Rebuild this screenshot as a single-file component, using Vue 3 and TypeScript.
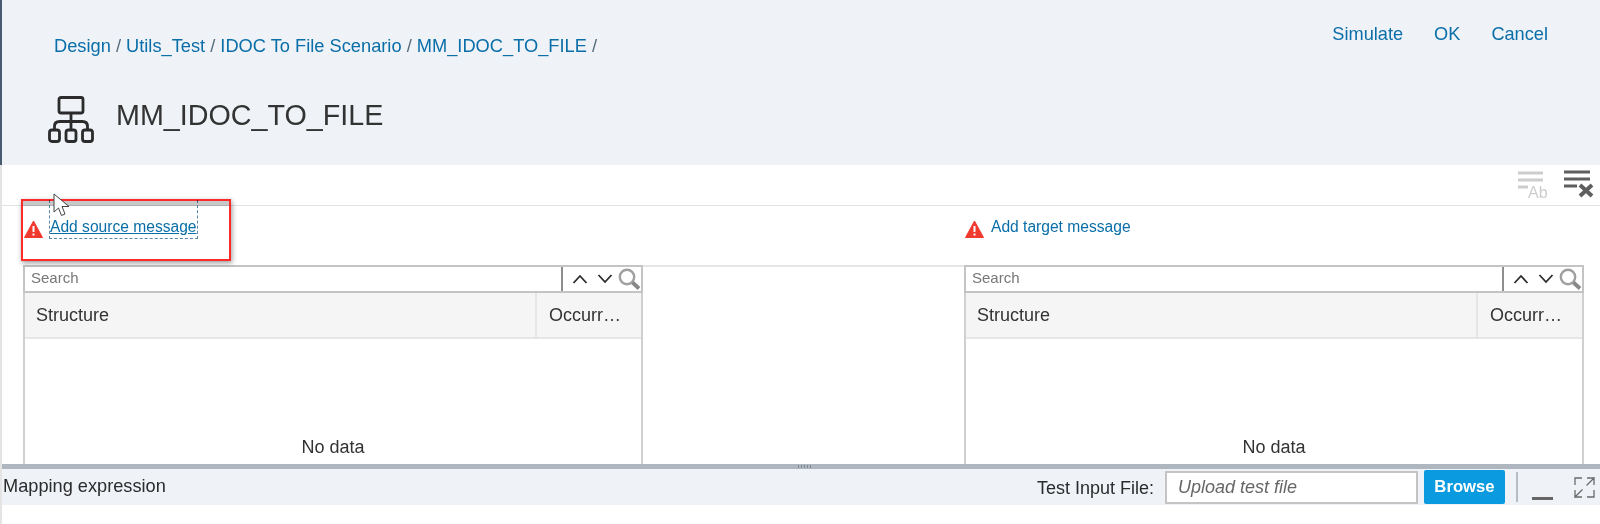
<script setup lang="ts">
const crumbs: string[] = ['Design', 'Utils_Test', 'IDOC To File Scenario', 'MM_IDOC_TO_FILE']
const actions: string[] = ['Simulate', 'OK', 'Cancel']
</script>

<template>
  <div class="app">
    <header class="head">
      <div class="head-main">
        <nav class="crumbs">
          <template v-for="c in crumbs" :key="c"><a class="link">{{ c }}</a><span class="sep"> / </span></template>
        </nav>
        <div class="title-row">
          <svg class="map-icon" width="46" height="47" viewBox="0 0 46 47" fill="none" stroke="#2b2b2b" stroke-width="2.8">
            <rect x="11" y="1.500" width="24" height="15.500" rx="2" />
            <path d="M23 17V34M6.500 34V30.500Q6.500 25.500 11.500 25.500H34.500Q39.500 25.500 39.500 30.500V34" />
            <rect x="1.500" y="34" width="10" height="11.500" rx="2.500" />
            <rect x="18" y="34" width="10" height="11.500" rx="2.500" />
            <rect x="34.500" y="34" width="10" height="11.500" rx="2.500" />
          </svg>
          <h1 class="title">MM_IDOC_TO_FILE</h1>
        </div>
      </div>
      <div class="actions">
        <a v-for="a in actions" :key="a" class="link">{{ a }}</a>
      </div>
    </header>

    <div class="toolbar">
      <svg class="tool" width="33" height="29" viewBox="0 0 33 29" stroke="#cdcdcd" stroke-width="3" fill="none">
        <path d="M1 2H26M1 9H26M1 16H11" />
        <text x="11" y="27" class="ab">Ab</text>
      </svg>
      <svg class="tool tool-clear" width="31" height="29" viewBox="0 0 31 29" stroke="#5f5f5f" stroke-width="3" fill="none">
        <path d="M1 2H27M1 9H27M1 16H14" />
        <path d="M17 15L29 26M29 15L17 26" stroke-width="4" />
      </svg>
    </div>

    <div class="messages">
      <div class="msg">
        <svg class="warn" width="19" height="18" viewBox="0 0 19 18">
          <path d="M9.500 1L18.500 17.500H.5Z" fill="#f0392f" stroke="#f0392f" stroke-linejoin="round" />
          <path d="M9.500 6V12M9.500 13.500V15.500" stroke="#fff" stroke-width="2" />
        </svg>
        <a class="link small focused">Add source message</a>
      </div>
      <div></div>
      <div class="msg">
        <svg class="warn" width="19" height="18" viewBox="0 0 19 18">
          <path d="M9.500 1L18.500 17.500H.5Z" fill="#f0392f" stroke="#f0392f" stroke-linejoin="round" />
          <path d="M9.500 6V12M9.500 13.500V15.500" stroke="#fff" stroke-width="2" />
        </svg>
        <a class="link small">Add target message</a>
      </div>
    </div>

    <div class="panes">
      <section v-for="n in 2" :key="n" class="pane">
        <div class="search">
          <span class="placeholder">Search</span>
          <span class="search-sep"></span>
          <svg width="16" height="10" viewBox="0 0 16 10" fill="none" stroke="#2b2b2b" stroke-width="1.800"><path d="M1.500 9L8 2L14.500 9" /></svg>
          <svg width="16" height="10" viewBox="0 0 16 10" fill="none" stroke="#2b2b2b" stroke-width="1.800"><path d="M1.500 1L8 8L14.500 1" /></svg>
          <svg width="23" height="22" viewBox="0 0 23 22" fill="none" stroke="#a0a0a0">
            <circle cx="9" cy="9" r="7.200" stroke-width="2.400" />
            <path d="M14.500 14.500L21 20.500" stroke-width="3.800" stroke="#888" />
          </svg>
        </div>
        <div class="thead">
          <div class="th th-main">Structure</div>
          <div class="th th-occ">Occurr…</div>
        </div>
        <div class="tbody">No data</div>
      </section>
      <div class="center"></div>
    </div>

    <div class="sash"><span class="grip"></span></div>

    <footer class="foot">
      <span class="foot-title">Mapping expression</span>
      <div class="foot-right">
        <label class="file-label">Test Input File:</label>
        <div class="file-input">Upload test file</div>
        <button class="browse" type="button">Browse</button>
        <span class="foot-sep"></span>
        <span class="minimize"></span>
        <svg class="expand" width="21" height="21" viewBox="0 0 21 21" fill="none" stroke="#6b6b6b" stroke-width="1.300">
          <path d="M1 8V1H8M20 13V20H13M13 1H20L12.500 8.500M20 1V8M8 20H1L8.500 12.500M1 20V13" />
        </svg>
      </div>
    </footer>

    <div class="callout"></div>
    <svg class="cursor" width="17" height="24" viewBox="0 0 17 24">
      <path d="M1 1V19L5.500 15L8.500 22.500L12 21L9 13.500H16Z" fill="#fff" stroke="#444" stroke-width="1" />
    </svg>
  </div>
</template>

<style>
html, body { margin: 0; background: #fff; }
</style>

<style scoped>
.app {
  position: relative;
  width: 1600px;
  height: 524px;
  overflow: hidden;
  box-sizing: border-box;
  padding-left: 2px;
  font-family: "Liberation Sans", Arial, sans-serif;
  color: #2b2b2b;
  background: linear-gradient(90deg, #e4e4e4 0 2px, #fff 2px);
  display: flex;
  flex-direction: column;
}
.head {
  height: 165px;
  flex: none;
  background: #eff3f8;
  margin-left: -2px;
  border-left: 2px solid #4a5a70;
  display: flex;
  justify-content: space-between;
}
.head-main { padding: 34px 0 0 52px; }
.crumbs { font-size: 18.250px; line-height: 24px; white-space: pre; }
.link { color: #0a6ea8; }
.sep { color: #556b7a; }
.title-row { display: flex; align-items: center; gap: 22px; margin: 34px 0 0 -6px; }
.map-icon { flex: none; }
.title { margin: 0 0 8px; font-size: 28.700px; font-weight: 400; line-height: 46px; color: #333; }
.actions { display: flex; gap: 31px; padding: 22px 52px 0 0; font-size: 18.200px; line-height: 24px; }
.toolbar {
  height: 40px;
  flex: none;
  border-bottom: 1px solid #e3e3e3;
  display: flex;
  justify-content: flex-end;
  align-items: center;
  gap: 13px;
  padding-right: 6px;
}
.tool-clear { margin-bottom: 2px; }
.ab { font-size: 16px; fill: #cdcdcd; stroke: none; }
.messages {
  height: 59px;
  flex: none;
  display: grid;
  grid-template-columns: 620px 321px 620px;
  padding-left: 21px;
}
.msg { display: flex; align-items: flex-start; gap: 7px; padding: 14px 0 0 1px; }
.warn { flex: none; }
.small { font-size: 15.600px; line-height: 18px; margin-top: -2px; }
.focused { position: relative; text-decoration: underline; }
.focused::after {
  content: "";
  position: absolute;
  inset: -18px -1px -3px -1px;
  border: 1px dashed #5b86a8;
  border-top: 0;
}
.panes {
  height: 199px;
  flex: none;
  padding-left: 21px;
  display: grid;
  grid-template-columns: 620px 321px 620px;
}
.pane {
  grid-row: 1;
  display: flex;
  flex-direction: column;
  border-right: 2px solid #d0d0d0;
  border-left: 2px solid #d0d0d0;
  box-sizing: border-box;
  min-width: 0;
}
.pane:nth-child(2) { grid-column: 3; }
.center { grid-column: 2; grid-row: 1; border-top: 2px solid #e6e6e6; }
.search {
  height: 28px;
  flex: none;
  box-sizing: border-box;
  margin-left: -2px;
  margin-right: -2px;
  border: 2px solid #c4c4c4;
  display: flex;
  align-items: center;
  background: #fff;
}
.placeholder { flex: 1; padding: 0 0 4px 6px; font-size: 15px; color: #777; }
.search-sep { width: 2px; height: 24px; background: #8e8e8e; margin-right: 9px; }
.search svg:nth-of-type(2) { margin-left: 9px; margin-right: 5px; }
.thead { display: flex; height: 46px; flex: none; background: #f5f5f5; border-bottom: 2px solid #e6e6e6; box-sizing: border-box; }
.th { font-size: 18px; display: flex; align-items: center; color: #333; }
.th-main { flex: 1; padding-left: 11px; }
.th-occ { width: 106px; box-sizing: border-box; padding-left: 12px; border-left: 2px solid #e6e6e6; }
.tbody { flex: 1; display: flex; align-items: flex-end; justify-content: center; font-size: 18px; padding-bottom: 6px; color: #333; }
.sash {
  height: 5px;
  flex: none;
  background: #aeb7bf;
  display: flex;
  justify-content: center;
  align-items: center;
}
.grip { width: 14px; height: 3px; margin-left: 8px; background: repeating-linear-gradient(90deg, #7e8890 0 1px, transparent 1px 3px); }
.foot {
  height: 36px;
  flex: none;
  background: #eff3f8;
  display: flex;
  align-items: center;
  justify-content: space-between;
  padding-left: 1px;
}
.foot-title { font-size: 18.200px; margin-bottom: 2px; }
.foot-right { display: flex; align-items: center; }
.file-label { font-size: 18px; margin: 2px 11px 0 0; white-space: nowrap; }
.file-input {
  width: 253px;
  height: 33px;
  box-sizing: border-box;
  border: 2px solid #c4c4c4;
  background: #fff;
  font-style: italic;
  font-size: 18px;
  color: #666;
  padding-left: 11px;
  line-height: 29px;
}
.browse {
  width: 81px;
  height: 34px;
  margin-left: 6px;
  border: 0;
  border-radius: 2px;
  background: #0a9ae0;
  color: #fff;
  font: 700 16.700px "Liberation Sans", Arial, sans-serif;
  padding: 0;
}
.foot-sep { width: 2px; height: 30px; background: #b5bcc2; margin-left: 11px; }
.minimize { width: 21px; height: 3px; background: #666; margin: 22px 0 0 14px; }
.expand { margin: 0 5px 0 21px; }
.callout {
  position: absolute;
  left: 21px;
  top: 199px;
  width: 210px;
  height: 62px;
  box-sizing: border-box;
  border: 2px solid #ff2a2a;
  box-shadow: 1px 2px 5px rgba(0, 0, 0, .4);
  background: linear-gradient(#c8c8c8 0 5px, transparent 5px);
  mix-blend-mode: multiply;
}
.cursor { position: absolute; left: 53px; top: 193px; }
</style>
